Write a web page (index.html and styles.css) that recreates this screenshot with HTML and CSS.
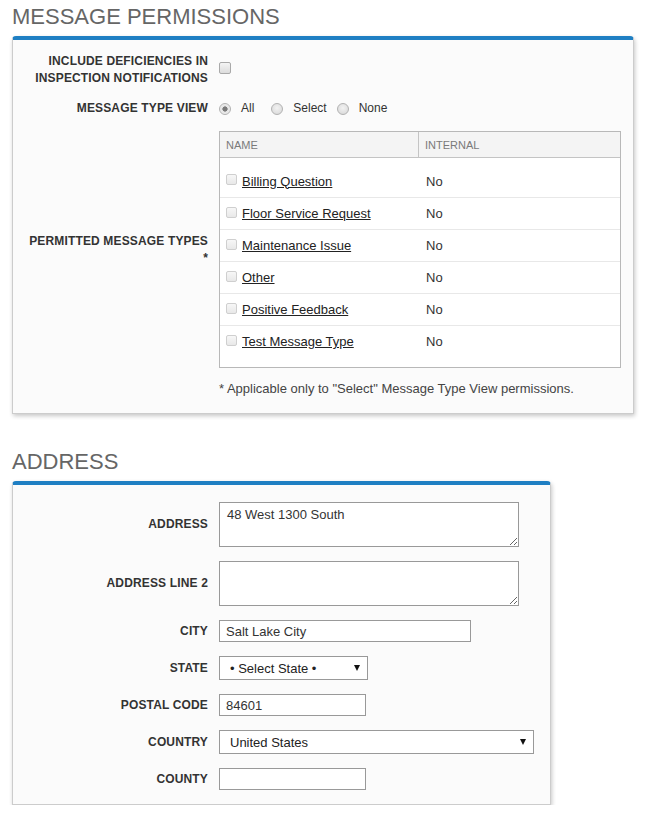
FILE: index.html
```html
<!DOCTYPE html>
<html lang="en">
<head>
<meta charset="utf-8">
<title>Permissions</title>
<link rel="stylesheet" href="styles.css">
</head>
<body>
<section class="section">
  <h2 class="title">MESSAGE PERMISSIONS</h2>
  <div class="card card-wide">
    <div class="row">
      <div class="label">INCLUDE DEFICIENCIES IN INSPECTION NOTIFICATIONS</div>
      <div class="control"><input type="checkbox" class="check check-lift"></div>
    </div>
    <div class="row">
      <div class="label">MESSAGE TYPE VIEW</div>
      <div class="control radios">
        <label class="opt"><input type="radio" name="mtv" class="radio" checked><span>All</span></label>
        <label class="opt opt-second"><input type="radio" name="mtv" class="radio"><span>Select</span></label>
        <label class="opt opt-third"><input type="radio" name="mtv" class="radio"><span>None</span></label>
      </div>
    </div>
    <div class="row">
      <div class="label">PERMITTED MESSAGE TYPES *</div>
      <div class="control">
        <div class="types">
          <div class="types-head">
            <div class="th th-name">NAME</div>
            <div class="th">INTERNAL</div>
          </div>
          <div class="types-body">
            <div class="tr"><div class="td td-name"><input type="checkbox" class="check check-sm" disabled><a class="link" href="#">Billing Question</a></div><div class="td">No</div></div>
            <div class="tr"><div class="td td-name"><input type="checkbox" class="check check-sm" disabled><a class="link" href="#">Floor Service Request</a></div><div class="td">No</div></div>
            <div class="tr"><div class="td td-name"><input type="checkbox" class="check check-sm" disabled><a class="link" href="#">Maintenance Issue</a></div><div class="td">No</div></div>
            <div class="tr"><div class="td td-name"><input type="checkbox" class="check check-sm" disabled><a class="link" href="#">Other</a></div><div class="td">No</div></div>
            <div class="tr"><div class="td td-name"><input type="checkbox" class="check check-sm" disabled><a class="link" href="#">Positive Feedback</a></div><div class="td">No</div></div>
            <div class="tr"><div class="td td-name"><input type="checkbox" class="check check-sm" disabled><a class="link" href="#">Test Message Type</a></div><div class="td">No</div></div>
          </div>
        </div>
      </div>
    </div>
    <div class="row row-note">
      <div class="label"></div>
      <div class="control note">* Applicable only to "Select" Message Type View permissions.</div>
    </div>
  </div>
</section>

<section class="section section-address">
  <h2 class="title">ADDRESS</h2>
  <div class="card card-narrow">
    <div class="row">
      <div class="label">ADDRESS</div>
      <div class="control"><textarea class="area">48 West 1300 South</textarea></div>
    </div>
    <div class="row">
      <div class="label">ADDRESS LINE 2</div>
      <div class="control"><textarea class="area"></textarea></div>
    </div>
    <div class="row">
      <div class="label">CITY</div>
      <div class="control"><input type="text" class="field field-city" value="Salt Lake City"></div>
    </div>
    <div class="row">
      <div class="label">STATE</div>
      <div class="control"><span class="select-wrap"><select class="select select-state"><option>• Select State •</option></select></span></div>
    </div>
    <div class="row">
      <div class="label">POSTAL CODE</div>
      <div class="control"><input type="text" class="field field-short" value="84601"></div>
    </div>
    <div class="row">
      <div class="label">COUNTRY</div>
      <div class="control"><span class="select-wrap"><select class="select select-country"><option>United States</option></select></span></div>
    </div>
    <div class="row">
      <div class="label">COUNTY</div>
      <div class="control"><input type="text" class="field field-short" value=""></div>
    </div>
  </div>
</section>
</body>
</html>
```

FILE: styles.css
```css
* {
  box-sizing: border-box;
}

html, body {
  background: #ffffff;
}

body {
  margin: 0;
  padding: 4px 12px 0;
  font-family: "Liberation Sans", Arial, sans-serif;
  color: #333333;
}

.section-address {
  margin-top: 35px;
}

.title {
  margin: 0 0 6px;
  font-size: 22px;
  line-height: 26px;
  font-weight: normal;
  color: #666666;
}

.card {
  background: #fbfbfb;
  border: 1px solid #cccccc;
  border-top: 4px solid #1f7fc3;
  border-radius: 4px 4px 0 0;
  box-shadow: 1px 2px 4px rgba(0, 0, 0, 0.22);
}

.card-wide {
  width: 622px;
  padding: 13px 0 16px;
}

.card-narrow {
  width: 539px;
  padding: 17px 0 14px;
}

.row {
  display: grid;
  grid-template-columns: 195px 1fr;
  column-gap: 11px;
  align-items: center;
  margin-bottom: 14px;
}

.card-wide .row:first-child {
  margin-bottom: 13px;
}

.row:last-child {
  margin-bottom: 0;
}

.row-note {
  margin-top: -2px;
}

.label {
  padding-left: 15px;
  text-align: right;
  font-size: 12px;
  line-height: 17px;
  font-weight: bold;
  letter-spacing: 0.15px;
  color: #333333;
}

.control {
  display: flex;
  align-items: center;
  min-width: 0;
}

/* checkboxes & radios */
.check {
  appearance: none;
  -webkit-appearance: none;
  margin: 0;
  width: 12px;
  height: 12px;
  border: 1px solid #a9a9a9;
  border-radius: 2px;
  background: linear-gradient(#f4f4f4, #dcdcdc);
}

.check-lift {
  margin-bottom: 4px;
}

.check-sm {
  width: 11px;
  height: 11px;
  border-color: #cfcfcf;
  background: linear-gradient(#f7f7f7, #e8e8e8);
  margin: 0 5px 3px 0;
  flex: none;
}

.radios {
  font-size: 12px;
  line-height: 17px;
  color: #333333;
}

.opt {
  display: flex;
  align-items: center;
}

.opt span {
  margin-left: 10px;
}

.opt-second {
  margin-left: 17px;
}

.opt-third {
  margin-left: 10px;
}

.radio {
  appearance: none;
  -webkit-appearance: none;
  margin: 0;
  width: 12px;
  height: 12px;
  border: 1px solid #b2b2b2;
  border-radius: 50%;
  background: radial-gradient(circle at 50% 40%, #f2f2f2, #d6d6d6);
}

.radio:checked {
  background: radial-gradient(circle, #7a7a7a 0 2.3px, #e4e4e4 2.9px, #f4f4f4 100%);
}

/* message types table */
.types {
  width: 402px;
  border: 1px solid #b8b8b8;
  background: #ffffff;
}

.types-head {
  display: grid;
  grid-template-columns: 199px 1fr;
  height: 26px;
  background: #f4f4f4;
  border-bottom: 1px solid #c4c4c4;
}

.th {
  display: flex;
  align-items: center;
  padding-left: 6px;
  font-size: 11px;
  color: #7a7a7a;
}

.th-name {
  border-right: 1px solid #c4c4c4;
}

.types-body {
  padding: 7px 0 10px;
}

.tr {
  display: grid;
  grid-template-columns: 200px 1fr;
  height: 32px;
}

.tr + .tr {
  border-top: 1px solid #e8e8e8;
}

.td {
  display: flex;
  align-items: center;
  padding-left: 6px;
  font-size: 13px;
  color: #333333;
}

.link {
  color: #222222;
  text-decoration: underline;
}

.note {
  font-size: 13px;
  line-height: 17px;
  color: #444444;
}

/* address fields */
.area {
  display: block;
  width: 300px;
  height: 45px;
  margin: 0;
  padding: 4px 7px;
  border: 1px solid #999999;
  border-radius: 0;
  background: #ffffff;
  font-family: "Liberation Sans", Arial, sans-serif;
  font-size: 13px;
  line-height: 15px;
  color: #333333;
  resize: both;
}

.field {
  display: block;
  height: 22px;
  margin: 0;
  padding: 0 6px;
  border: 1px solid #999999;
  border-radius: 0;
  background: #ffffff;
  font-family: "Liberation Sans", Arial, sans-serif;
  font-size: 13px;
  color: #333333;
}

.field-city {
  width: 252px;
}

.field-short {
  width: 147px;
}

.select-wrap {
  position: relative;
  display: inline-block;
}

.select-wrap::after {
  content: "";
  position: absolute;
  right: 8px;
  top: 50%;
  margin-top: -3px;
  border-left: 3px solid transparent;
  border-right: 3px solid transparent;
  border-top: 6px solid #111111;
  pointer-events: none;
}

.select {
  appearance: none;
  -webkit-appearance: none;
  display: block;
  height: 24px;
  margin: 0;
  padding: 0 20px 0 10px;
  border: 1px solid #999999;
  border-radius: 0;
  background: #ffffff;
  font-family: "Liberation Sans", Arial, sans-serif;
  font-size: 13px;
  color: #222222;
}

.select-state {
  width: 149px;
}

.select-country {
  width: 315px;
}
```
